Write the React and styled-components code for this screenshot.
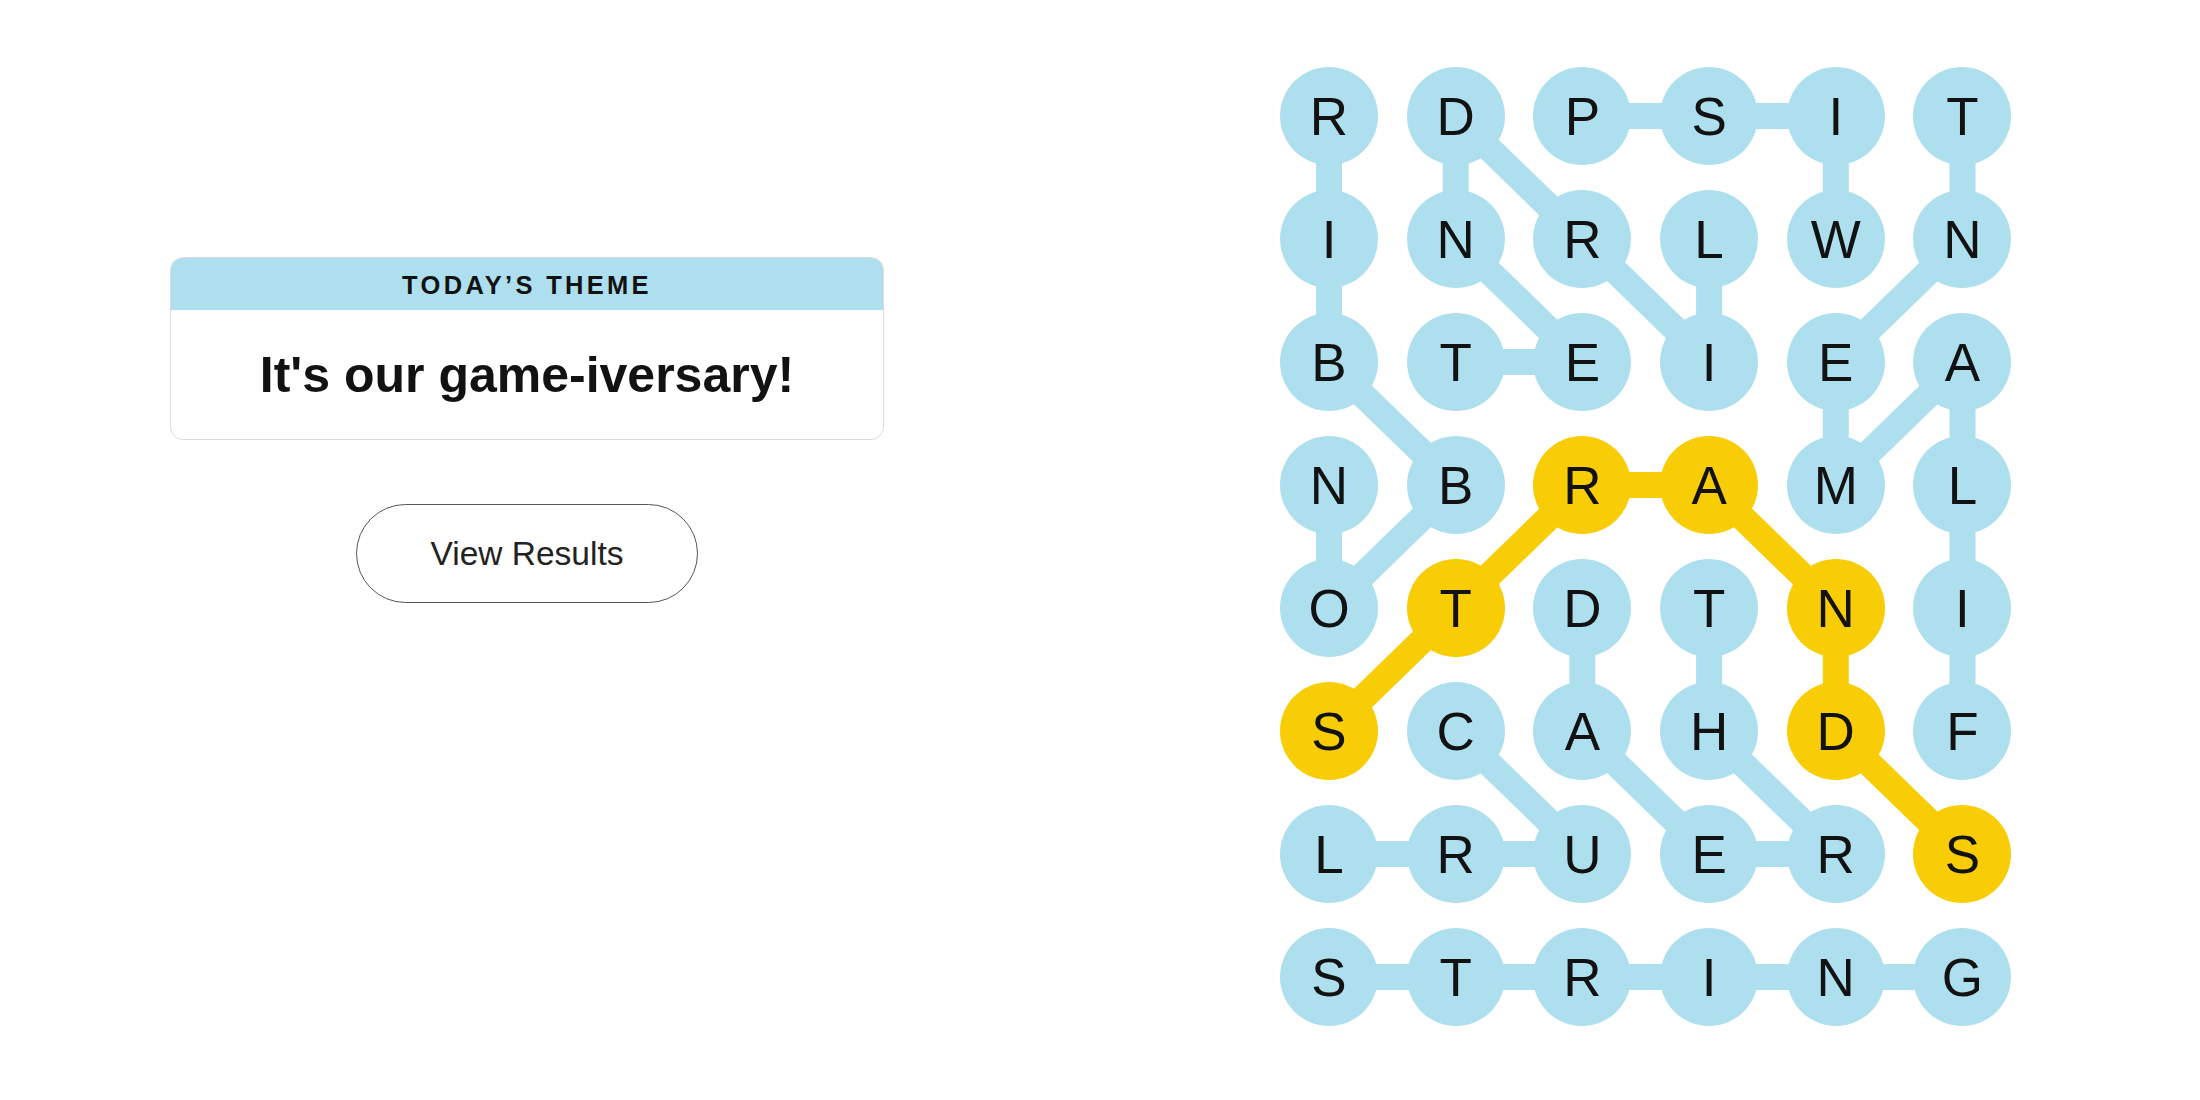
import React from 'react';
import styled, { createGlobalStyle } from 'styled-components';

const CELL = 98;
const COL_STEP = 126.7;
const ROW_STEP = 123;

const GlobalStyle = createGlobalStyle`
  body {
    margin: 0;
    background: #fff;
    font-family: "Liberation Sans", Arial, sans-serif;
    color: #121212;
  }
`;

const Page = styled.main`
  display: flex;
  align-items: flex-start;
  padding: 67px 0 0 170px;
  min-height: 1100px;
  box-sizing: border-box;
`;

const Sidebar = styled.section`
  width: 714px;
  margin-top: 190px;
  display: flex;
  flex-direction: column;
  align-items: center;
`;

const ThemeCard = styled.div`
  width: 100%;
  box-sizing: border-box;
  border: 1px solid #dcdcdc;
  border-radius: 13px;
  overflow: hidden;
  background: #fff;
`;

const ThemeHeader = styled.div`
  height: 52px;
  background: #aedfee;
  display: flex;
  align-items: center;
  justify-content: center;
  padding-top: 3px;
  box-sizing: border-box;
  font-size: 25.5px;
  font-weight: 700;
  letter-spacing: 3.3px;
  text-transform: uppercase;
  color: #121212;
`;

const ThemeTitle = styled.h1`
  margin: 0;
  height: 129px;
  display: flex;
  align-items: center;
  justify-content: center;
  font-size: 50px;
  font-weight: 700;
  color: #121212;
`;

const ResultsButton = styled.button`
  margin-top: 64px;
  width: 342px;
  height: 99px;
  border: 1px solid #555;
  border-radius: 50px;
  background: #fff;
  font-family: inherit;
  font-size: 33.5px;
  color: #222;
  cursor: pointer;
`;

const Board = styled.div`
  position: relative;
  margin-left: 396px;
`;

const Connectors = styled.svg`
  position: absolute;
  inset: 0;
  z-index: 0;
  overflow: visible;
`;

const LetterGrid = styled.div`
  position: relative;
  z-index: 1;
  display: grid;
  grid-template-columns: repeat(6, ${CELL}px);
  grid-auto-rows: ${CELL}px;
  column-gap: ${COL_STEP - CELL}px;
  row-gap: ${ROW_STEP - CELL}px;
`;

const Letter = styled.button`
  width: ${CELL}px;
  height: ${CELL}px;
  border: none;
  border-radius: 50%;
  padding: 0;
  display: flex;
  align-items: center;
  justify-content: center;
  background: ${({ $spangram }) => ($spangram ? '#f8cd05' : '#aedfee')};
  font-family: "Liberation Sans", Arial, sans-serif;
  font-size: 53px;
  line-height: 1;
  color: #121212;
`;

const rows = ['RDPSIT', 'INRLWN', 'BTEIEA', 'NBRAML', 'OTDTNI', 'SCAHDF', 'LRUERS', 'STRING'];

const words = [
  { path: [[0, 0], [1, 0], [2, 0], [3, 1], [4, 0], [3, 0]] },
  { path: [[2, 1], [2, 2], [1, 1], [0, 1], [1, 2], [2, 3], [1, 3]] },
  { path: [[1, 4], [0, 4], [0, 3], [0, 2]] },
  { path: [[5, 5], [4, 5], [3, 5], [2, 5], [3, 4], [2, 4], [1, 5], [0, 5]] },
  { path: [[4, 3], [5, 3], [6, 4], [6, 3], [5, 2], [4, 2]] },
  { path: [[5, 1], [6, 2], [6, 1], [6, 0]] },
  { path: [[7, 0], [7, 1], [7, 2], [7, 3], [7, 4], [7, 5]] },
  { path: [[5, 0], [4, 1], [3, 2], [3, 3], [4, 4], [5, 4], [6, 5]], spangram: true },
];

const spangramCells = new Set(
  words.filter((w) => w.spangram).flatMap((w) => w.path.map(([r, c]) => `${r}-${c}`)),
);

const center = ([r, c]) => [CELL / 2 + c * COL_STEP, CELL / 2 + r * ROW_STEP];

const App = () => (
  <>
    <GlobalStyle />
    <Page>
      <Sidebar>
        <ThemeCard>
          <ThemeHeader>Today’s Theme</ThemeHeader>
          <ThemeTitle>It's our game-iversary!</ThemeTitle>
        </ThemeCard>
        <ResultsButton type="button">View Results</ResultsButton>
      </Sidebar>
      <Board>
        <Connectors width="100%" height="100%">
          {words.map(({ path, spangram }) => path.slice(1).map((cell, i) => {
            const [x1, y1] = center(path[i]);
            const [x2, y2] = center(cell);
            return (
              <line
                key={`${cell[0]}-${cell[1]}-${i}`}
                x1={x1}
                y1={y1}
                x2={x2}
                y2={y2}
                stroke={spangram ? '#f8cd05' : '#aedfee'}
                strokeWidth={26}
              />
            );
          }))}
        </Connectors>
        <LetterGrid>
          {rows.map((row, r) => row.split('').map((ch, c) => (
            <Letter key={`${r}-${c}`} type="button" $spangram={spangramCells.has(`${r}-${c}`)}>
              {ch}
            </Letter>
          )))}
        </LetterGrid>
      </Board>
    </Page>
  </>
);

export default App;
